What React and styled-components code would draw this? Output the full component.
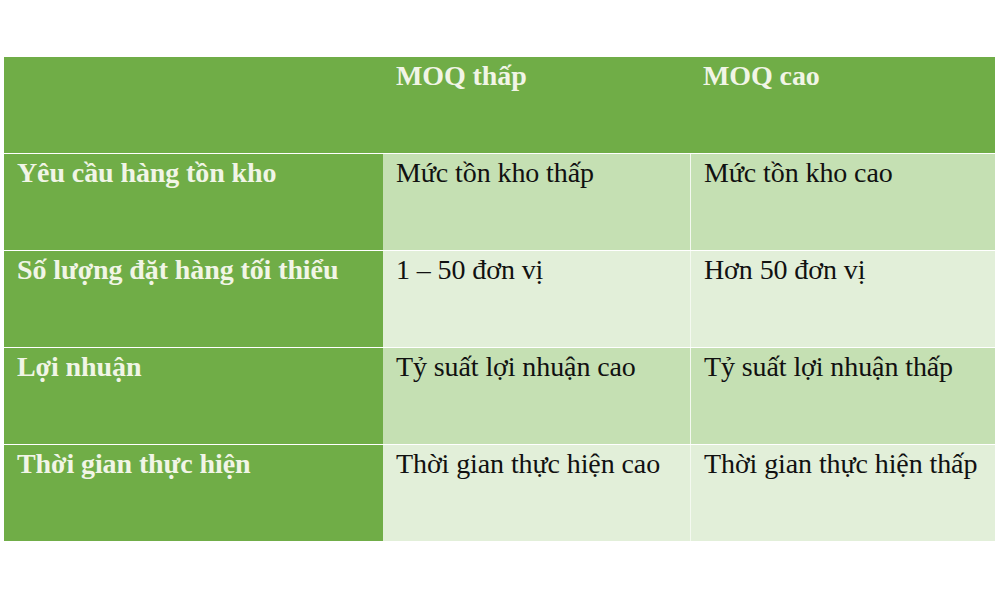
import React from 'react'
import styled, { createGlobalStyle } from 'styled-components'

const Global = createGlobalStyle`
  html, body { margin: 0; padding: 0; background: #fff; }
  body { font-family: "Liberation Serif", "Times New Roman", serif; }
`

const Page = styled.div`
  width: 1000px;
  height: 600px;
  padding: 57px 5px 0 4px;
  box-sizing: border-box;
`

const Grid = styled.div`
  display: grid;
  grid-template-columns: 379px 307px 305px;
  grid-auto-rows: 96px;
  row-gap: 1px;
  background: #fff;
`

const Cell = styled.div`
  padding: 3px 13px 0;
  font-size: 28px;
  line-height: 1.15;
  letter-spacing: -0.1px;
  background: ${p => p.$tone === 'head' ? '#70ad47' : p.$tone === 'dark' ? '#c5e0b3' : '#e2efd9'};
  color: ${p => p.$tone === 'head' ? '#f1f5e6' : '#111'};
  font-weight: ${p => p.$tone === 'head' ? 700 : 400};
  border-left: ${p => p.$split ? '1px solid #f4f9f0' : 'none'};
  white-space: nowrap;
`

const rows = [
  ['Yêu cầu hàng tồn kho', 'Mức tồn kho thấp', 'Mức tồn kho cao'],
  ['Số lượng đặt hàng tối thiểu', '1 – 50 đơn vị', 'Hơn 50 đơn vị'],
  ['Lợi nhuận', 'Tỷ suất lợi nhuận cao', 'Tỷ suất lợi nhuận thấp'],
  ['Thời gian thực hiện', 'Thời gian thực hiện cao', 'Thời gian thực hiện thấp'],
]

export default function App() {
  return (
    <Page>
      <Global />
      <Grid>
        <Cell $tone="head" />
        <Cell $tone="head">MOQ thấp</Cell>
        <Cell $tone="head">MOQ cao</Cell>
        {rows.map((r, i) => (
          <React.Fragment key={i}>
            <Cell $tone="head">{r[0]}</Cell>
            <Cell $tone={i % 2 === 0 ? 'dark' : 'light'}>{r[1]}</Cell>
            <Cell $tone={i % 2 === 0 ? 'dark' : 'light'} $split>{r[2]}</Cell>
          </React.Fragment>
        ))}
      </Grid>
    </Page>
  )
}
